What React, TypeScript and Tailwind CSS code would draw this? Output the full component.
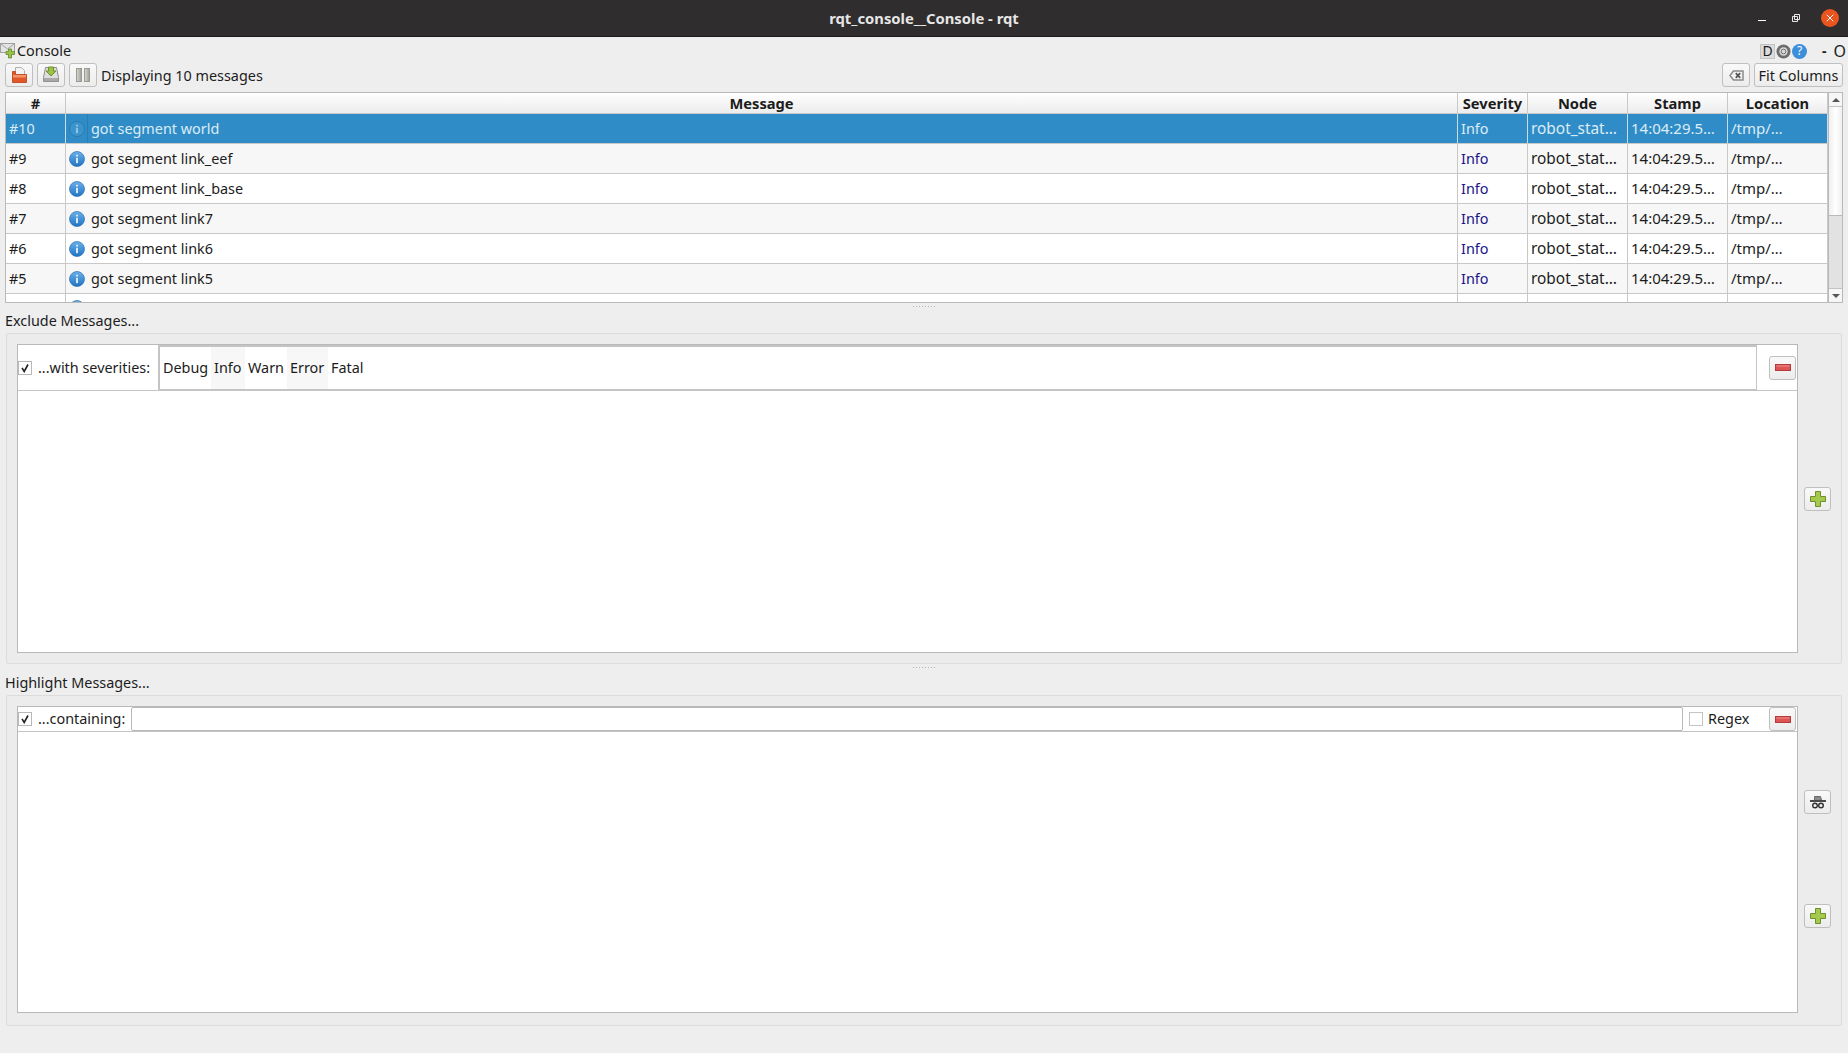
import React from "react";
import { X } from "lucide-react";

const rows = [
  { id: "#10", msg: "got segment world" },
  { id: "#9", msg: "got segment link_eef" },
  { id: "#8", msg: "got segment link_base" },
  { id: "#7", msg: "got segment link7" },
  { id: "#6", msg: "got segment link6" },
  { id: "#5", msg: "got segment link5" },
];

const severities = [
  { name: "Debug", w: "w-[51px]", bg: "bg-white" },
  { name: "Info", w: "w-[34px]", bg: "bg-[#f7f7f7]" },
  { name: "Warn", w: "w-[42px]", bg: "bg-white" },
  { name: "Error", w: "w-[41px]", bg: "bg-[#f7f7f7]" },
  { name: "Fatal", w: "w-[40px]", bg: "bg-white" },
];

const InfoIcon = ({ selected }: { selected?: boolean }) => (
  <svg width="16" height="16" viewBox="0 0 16 16">
    <defs>
      <linearGradient id="infoGrad" x1="0" y1="0" x2="0" y2="1">
        <stop offset="0" stopColor="#6cb0ea" />
        <stop offset="1" stopColor="#1f74c4" />
      </linearGradient>
    </defs>
    <circle cx="8" cy="8" r="7.5" fill={selected ? "#3c94cd" : "url(#infoGrad)"} stroke={selected ? "#2174ab" : "#2a6fb0"} strokeWidth="0.7" />
    <rect x="7.2" y="6.8" width="1.6" height="5.4" fill={selected ? "#a9d2ec" : "#fff"} />
    <rect x="7.2" y="3.8" width="1.6" height="1.7" fill={selected ? "#a9d2ec" : "#fff"} />
  </svg>
);

const ToolButton = ({ children, w = "w-[28px]" }: { children: React.ReactNode; w?: string }) => (
  <div className={`${w} h-[24px] shrink-0 flex items-center justify-center rounded-[3px] border border-[#bfbfbf] bg-gradient-to-b from-[#f9f9f9] to-[#ececec]`}>
    {children}
  </div>
);

const Minus = () => (
  <svg width="16" height="7" viewBox="0 0 16 7">
    <rect x="0.5" y="0.5" width="15" height="6" fill="#dc5454" stroke="#b53a3a" />
    <rect x="1.5" y="1.5" width="13" height="1" fill="#ee8f8f" />
  </svg>
);

const Plus = () => (
  <svg width="16" height="16" viewBox="0 0 16 16">
    <path d="M5.5.5h5v5h5v5h-5v5h-5v-5h-5v-5h5z" fill="#a5c94a" stroke="#6f8f2c" />
  </svg>
);

const Check = () => (
  <div className="w-[14px] h-[14px] border border-[#b8b8b8] bg-white flex items-center justify-center shrink-0">
    <svg width="10" height="10" viewBox="0 0 10 10">
      <path d="M2 4.800 4.200 8.500 8 1.500" fill="none" stroke="#222" strokeWidth="1.600" />
    </svg>
  </div>
);

const Handle = ({ h }: { h: string }) => (
  <div className={`${h} shrink-0 flex justify-center items-center`}>
    {[0, 1, 2, 3, 4, 5, 6, 7].map((i) => (
      <div key={i} className="w-[1px] h-[1px] bg-[#b5b5b5] mx-[1px]" />
    ))}
  </div>
);

const dataCell = "border-r leading-[29px] pl-[3px]";

export default function App() {
  return (
    <div className="w-[1848px] h-[1053px] overflow-hidden flex flex-col bg-[#eeeeee] text-[#1c1c1c] text-[14.4px] font-['Noto_Sans','Open_Sans',sans-serif]">
      {/* window title */}
      <div className="h-[37px] shrink-0 bg-[#2f2d2d] border-b border-[#1d1c1c] flex items-center justify-center relative">
        <span className="text-[#e6e6e6] font-bold text-[14.8px] mt-[1px]">rqt_console__Console - rqt</span>
        <div className="absolute right-[9px] top-[9px] flex items-center">
          <div className="w-[8px] h-[1px] bg-white mr-[26px] mt-[4px]" />
          <svg width="8" height="8" viewBox="0 0 8 8" className="mr-[21px]">
            <path d="M2.500.5h5v5h-5z M.5 2.500h5v5h-5z" fill="#2f2d2d" stroke="#e8e8e8" />
          </svg>
          <div className="w-[18px] h-[18px] rounded-full bg-[#e9541f] flex items-center justify-center">
            <X size={12} color="#fff" strokeWidth={2} />
          </div>
        </div>
      </div>

      {/* dock title */}
      <div className="h-[26px] shrink-0 flex items-center pt-[2px]">
        <svg width="16" height="16" viewBox="0 0 16 16" className="shrink-0">
          <rect x="0.5" y="0.5" width="14" height="9" fill="#e4e4e4" stroke="#a0a0a0" />
          <path d="M1 1 7.500 6 14 1" fill="none" stroke="#a0a0a0" />
          <path d="M8.500 6h3v2.500h3v3h-3V15h-3v-3.500h-2.500v-3h2.500z" fill="#9cc24a" stroke="#5f8a2a" strokeWidth="0.8" />
        </svg>
        <span className="leading-none pl-[1px]">Console</span>
        <div className="ml-auto flex items-center">
          <div className="w-[15px] h-[15px] bg-[#dcdcdc] border border-[#c4c4c4] flex items-center justify-center text-[14px] leading-none mr-[1px]">D</div>
          <svg width="15" height="15" viewBox="0 0 16 16">
            <circle cx="8" cy="8" r="7.500" fill="#6d6d6d" />
            <circle cx="8" cy="8" r="4.500" fill="#d8d8d8" />
            <circle cx="8" cy="8" r="2.500" fill="none" stroke="#6d6d6d" />
          </svg>
          <div className="w-[15px] h-[15px] rounded-full bg-[#3d8edb] text-white flex items-center justify-center text-[12px] leading-none ml-[1px]">?</div>
          <span className="ml-[15px] font-bold text-[14px] leading-none">-</span>
          <span className="ml-[7px] mr-[2px] text-[16px] leading-none">O</span>
        </div>
      </div>

      {/* toolbar */}
      <div className="h-[29px] shrink-0 flex items-start pl-[5px] pr-[5px] gap-[4px]">
        <ToolButton>
          <svg width="18" height="18" viewBox="0 0 18 18">
            <path d="M5.500 1.500h6l3 3V9h-9z" fill="#f2f2f2" stroke="#b0b0b0" />
            <path d="M2.500 5.500h3v3h11v8h-14z" fill="#e0582a" stroke="#c4502a" />
            <rect x="3" y="9" width="13" height="2.500" fill="#f3956a" />
          </svg>
        </ToolButton>
        <ToolButton>
          <svg width="18" height="18" viewBox="0 0 18 18">
            <path d="M3.500 1.500h11l2 10v4h-15v-4z" fill="#dedede" stroke="#8f8f8f" />
            <rect x="2" y="12" width="14" height="3" fill="#a9a9a9" />
            <path d="M6.500 1h5v4H14L9 10 4 5h2.500z" fill="#9cc24a" stroke="#6f8f2c" />
          </svg>
        </ToolButton>
        <ToolButton>
          <div className="flex gap-[2px]">
            <div className="w-[6px] h-[14px] bg-gradient-to-r from-[#d4d4cc] to-[#a4a49c] border border-[#9a9a94]" />
            <div className="w-[6px] h-[14px] bg-gradient-to-r from-[#d4d4cc] to-[#a4a49c] border border-[#9a9a94]" />
          </div>
        </ToolButton>
        <span className="leading-[25px]">Displaying 10 messages</span>
        <div className="ml-auto flex gap-[4px]">
          <ToolButton>
            <svg width="15" height="11" viewBox="0 0 15 11">
              <path d="M4.500 1h9.500v9H4.500L1 5.500z" fill="#f2f2f2" stroke="#8a8a8a" strokeWidth="1.500" />
              <path d="M6.800 3.200l4.400 4.600m0-4.600L6.800 7.800" stroke="#555" strokeWidth="1.800" />
            </svg>
          </ToolButton>
          <ToolButton w="w-[89px]"><span className="leading-[25px]">Fit Columns</span></ToolButton>
        </div>
      </div>

      {/* message table */}
      <div className="h-[211px] shrink-0 ml-[5px] mr-[5px] border border-[#b9b9b9] flex bg-white overflow-hidden">
        <div className="flex-1 min-w-0 flex flex-col overflow-hidden">
          <div className="h-[21px] shrink-0 flex font-bold text-[14.7px] border-b border-[#c8c8c8] bg-gradient-to-b from-white to-[#ececec]">
            <div className="w-[60px] text-center border-r border-[#c8c8c8] leading-[20px]">#</div>
            <div className="flex-1 text-center border-r border-[#c8c8c8] leading-[20px]">Message</div>
            <div className="w-[70px] text-center border-r border-[#c8c8c8] leading-[20px]">Severity</div>
            <div className="w-[100px] text-center border-r border-[#c8c8c8] leading-[20px]">Node</div>
            <div className="w-[100px] text-center border-r border-[#c8c8c8] leading-[20px]">Stamp</div>
            <div className="w-[100px] text-center border-r border-[#c8c8c8] leading-[20px]">Location</div>
          </div>
          {rows.map((r, i) => {
            const sel = i === 0;
            const bg = sel ? "bg-[#308cc6] text-[#dcecf6]" : i % 2 === 1 ? "bg-[#f7f7f7]" : "bg-white";
            const line = sel ? "border-[#c8dcea]" : "border-[#c8c8c8]";
            return (
              <div key={r.id} className={`h-[30px] shrink-0 flex items-stretch border-b border-[#c8c8c8] ${bg}`}>
                <div className={`w-[60px] ${dataCell} ${line}`}>{r.id}</div>
                <div className={`flex-1 flex items-center border-r ${line}`}>
                  <div className="w-[21px] pl-[3px] shrink-0 flex">
                    <InfoIcon selected={sel} />
                  </div>
                  <div className={`flex-1 h-full flex items-center pl-[3px] border-l ${sel ? "border-[#2a7cb2]" : "border-transparent"}`}>{r.msg}</div>
                </div>
                <div className={`w-[70px] ${dataCell} ${line} ${sel ? "" : "text-[#1a1488]"}`}>Info</div>
                <div className={`w-[100px] ${dataCell} ${line} text-[15.4px]`}>robot_stat…</div>
                <div className={`w-[100px] ${dataCell} ${line} text-[15px]`}>14:04:29.5…</div>
                <div className={`w-[100px] ${dataCell} ${line} text-[15px]`}>/tmp/…</div>
              </div>
            );
          })}
          <div className="flex-1 flex min-h-0 overflow-hidden">
            <div className="w-[60px] border-r border-[#c8c8c8]" />
            <div className="flex-1 border-r border-[#c8c8c8] pl-[3px] pt-[6px] overflow-hidden">
              <InfoIcon />
            </div>
            <div className="w-[70px] border-r border-[#c8c8c8]" />
            <div className="w-[100px] border-r border-[#c8c8c8]" />
            <div className="w-[100px] border-r border-[#c8c8c8]" />
            <div className="w-[100px] border-r border-[#c8c8c8]" />
          </div>
        </div>
        {/* scrollbar */}
        <div className="w-[14px] shrink-0 flex flex-col bg-[#e2e2e2] border-l border-[#b9b9b9]">
          <div className="h-[14px] bg-[#f6f6f6] border-b border-[#c4c4c4] flex items-center justify-center">
            <div className="w-0 h-0 border-x-[4px] border-x-transparent border-b-[4px] border-b-[#555]" />
          </div>
          <div className="h-[109px] bg-gradient-to-r from-[#efefef] via-white to-[#efefef] border-b border-[#b9b9b9]" />
          <div className="flex-1" />
          <div className="h-[14px] bg-[#f6f6f6] border-t border-[#c4c4c4] flex items-center justify-center">
            <div className="w-0 h-0 border-x-[4px] border-x-transparent border-t-[4px] border-t-[#555]" />
          </div>
        </div>
      </div>

      <Handle h="h-[6px]" />

      {/* exclude section */}
      <div className="h-[24px] shrink-0 pl-[5px] leading-[24px]">Exclude Messages...</div>
      <div className="h-[331px] shrink-0 mx-[6px] border border-[#dcdcdc] rounded-[2px] bg-[#ececec] flex items-stretch py-[10px] pl-[10px]">
        <div className="w-[1781px] border border-[#b9b9b9] bg-white flex flex-col shrink-0">
          <div className="h-[46px] shrink-0 flex items-center border-b border-[#c4c4c4]">
            <Check />
            <span className="w-[126px] pl-[6px] shrink-0 whitespace-nowrap">...with severities:</span>
            <div className="w-[1599px] h-[46px] flex items-stretch border-l-2 border-r border-t-2 border-b-2 border-[#c4c4c4] shrink-0">
              {severities.map((s) => (
                <div key={s.name} className={`${s.w} ${s.bg} h-full flex items-center pl-[3px] whitespace-nowrap`}>{s.name}</div>
              ))}
            </div>
            <div className="ml-[12px]">
              <ToolButton w="w-[27px]"><Minus /></ToolButton>
            </div>
          </div>
        </div>
        <div className="flex-1 flex flex-col justify-center pl-[6px]">
          <ToolButton w="w-[27px]"><Plus /></ToolButton>
        </div>
      </div>

      <Handle h="h-[7px]" />

      {/* highlight section */}
      <div className="h-[24px] shrink-0 pl-[5px] leading-[24px]">Highlight Messages...</div>
      <div className="h-[331px] shrink-0 mx-[6px] border border-[#dcdcdc] rounded-[2px] bg-[#ececec] flex items-stretch pt-[10px] pb-[12px] pl-[10px]">
        <div className="w-[1781px] border border-[#b9b9b9] bg-white flex flex-col shrink-0">
          <div className="h-[25px] shrink-0 flex items-center border-b border-[#c4c4c4]">
            <Check />
            <span className="w-[99px] pl-[6px] shrink-0 whitespace-nowrap">...containing:</span>
            <div className="w-[1552px] h-[24px] shrink-0 border border-[#b9b9b9] rounded-[2px] bg-white" />
            <div className="ml-[6px] w-[14px] h-[14px] border border-[#c4c4c4] bg-white shrink-0" />
            <span className="ml-[5px]">Regex</span>
            <div className="ml-auto mr-[1px]">
              <ToolButton w="w-[27px]"><Minus /></ToolButton>
            </div>
          </div>
        </div>
        <div className="flex-1 flex flex-col gap-[90px] pt-[84px] pl-[6px]">
          <ToolButton w="w-[27px]">
            <svg width="16" height="14" viewBox="0 0 16 14">
              <path d="M4.500 5V1.500h6l1 3.500" fill="#8a8a8a" stroke="#6a6a6a" />
              <rect x="0" y="5" width="16" height="2" fill="#4a4a4a" />
              <circle cx="5" cy="10.500" r="2.300" fill="none" stroke="#333" strokeWidth="1.400" />
              <circle cx="11" cy="10.500" r="2.300" fill="none" stroke="#333" strokeWidth="1.400" />
            </svg>
          </ToolButton>
          <ToolButton w="w-[27px]"><Plus /></ToolButton>
        </div>
      </div>
    </div>
  );
}
